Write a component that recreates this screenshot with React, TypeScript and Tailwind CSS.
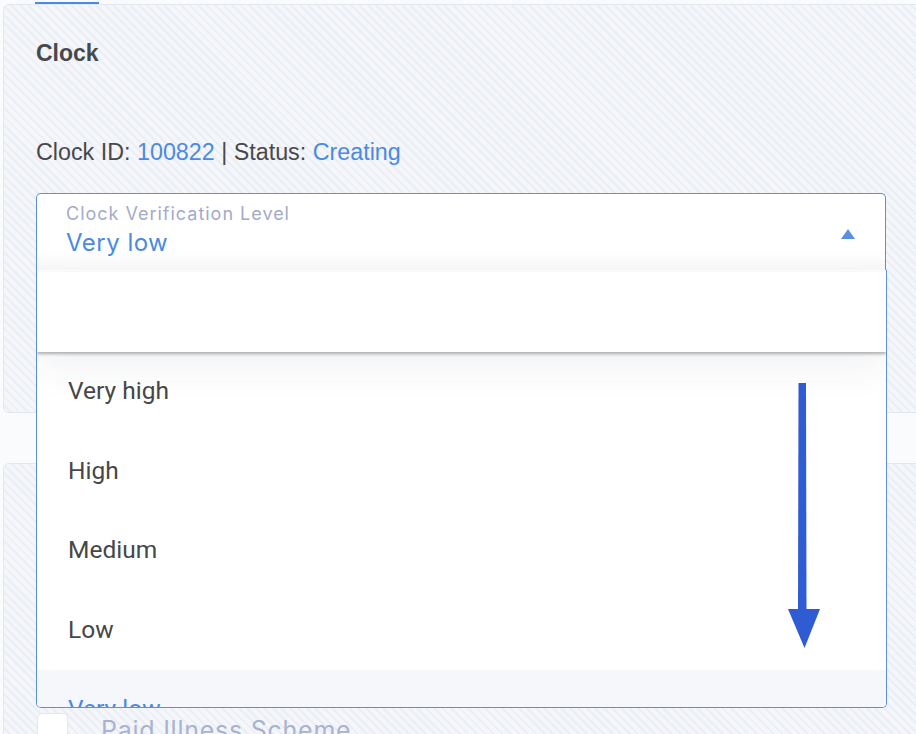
import React from 'react';

const options = ['Very high', 'High', 'Medium', 'Low', 'Very low'];
const selected = 'Very low';

const stripes =
  'bg-[repeating-linear-gradient(45deg,#f5f6fa_0px,#f5f6fa_4px,#eceef5_4px,#eceef5_6px)]';

const ClockSelect: React.FC = () => (
  <div className="relative mr-[41px]">
    {/* select head */}
    <div className="h-[77px] rounded-t-[5px] border-x border-t border-[#5b8fe0] bg-gradient-to-b from-white from-75% to-[#f6f6f7] pl-[29px] pr-[30px] pt-[10px] flex justify-between">
      <div className="flex flex-col gap-[4px]">
        <span className="text-[18px] leading-[20px] tracking-[0.055em] text-[#a3abc9] font-['Inter',sans-serif]">
          Clock Verification Level
        </span>
        <span className="text-[24px] leading-[30px] tracking-[0.02em] text-[#4a8ae2] font-['Inter',sans-serif]">
          {selected}
        </span>
      </div>
      <svg width="14" height="10" viewBox="0 0 14 10" className="mt-[25px]">
        <path d="M7 0 L14 10 L0 10 Z" fill="#5a8fe2" />
      </svg>
    </div>

    {/* open menu */}
    <div className="absolute left-0 right-[-1px] top-full z-10 h-[438px] overflow-hidden rounded-b-[5px] border-x border-b border-[#5b8fe0] bg-white">
      <div className="relative z-10 h-[80px] mt-[2px] bg-white shadow-[0_2px_3px_rgba(0,0,0,0.3),0_14px_40px_rgba(40,50,90,0.07)]" />
      {options.map((o) => (
        <div
          key={o}
          className={`h-[79.5px] flex items-center pl-[31px] text-[24.5px] font-['Roboto',sans-serif] ${
            o === selected ? 'bg-[#f5f7fb] text-[#4a8ae2]' : 'text-[#474747]'
          }`}
        >
          {o}
        </div>
      ))}
    </div>
  </div>
);

const App: React.FC = () => {
  return (
    <div className="relative h-[734px] w-[916px] overflow-hidden bg-[#fafbfc]">
      {/* active tab underline */}
      <div className="ml-[35px] h-[2px] w-[64px] bg-[#4a8ae2] mt-[2px]" />

      {/* Clock card */}
      <div className={`ml-[3px] mr-[-12px] h-[409px] rounded-[6px] border border-[#e4e7ee] ${stripes} pl-[32px] pt-[34px]`}>
        <h2 className="text-[23px] leading-[28px] font-bold text-[#48484c] font-['Liberation_Sans',sans-serif]">
          Clock
        </h2>
        <p className="mt-[71px] text-[23.3px] leading-[28px] text-[#48484c] font-['Liberation_Sans',sans-serif]">
          Clock ID: <span className="text-[#4a8ae2]">100822</span> | Status:{' '}
          <span className="text-[#4a8ae2]">Creating</span>
        </p>
        <div className="mt-[27px]">
          <ClockSelect />
        </div>
      </div>

      {/* next card */}
      <div className={`mt-[50px] ml-[3px] mr-[-12px] h-[400px] rounded-[6px] border border-[#e4e7ee] ${stripes} pl-[33px] pt-[249px]`}>
        <div className="flex items-start gap-[33px]">
          <div className="h-[31px] w-[31px] shrink-0 rounded-[5px] border border-[#e4e7ee] bg-white" />
          <span className="mt-[2px] text-[25px] leading-[30px] tracking-[0.03em] text-[#a9b3d1] font-['Inter',sans-serif]">
            Paid Illness Scheme
          </span>
        </div>
      </div>

      {/* scroll hint arrow */}
      <svg
        className="absolute left-[786px] top-[383px] z-20"
        width="36"
        height="267"
        viewBox="0 0 36 267"
      >
        <path d="M12.5 0 L20 0 L20.5 226 L12 226 Z" fill="#2f5bd3" />
        <path d="M2 226 L34 226 L18.5 265 Z" fill="#2f5bd3" />
      </svg>
    </div>
  );
};

export default App;
